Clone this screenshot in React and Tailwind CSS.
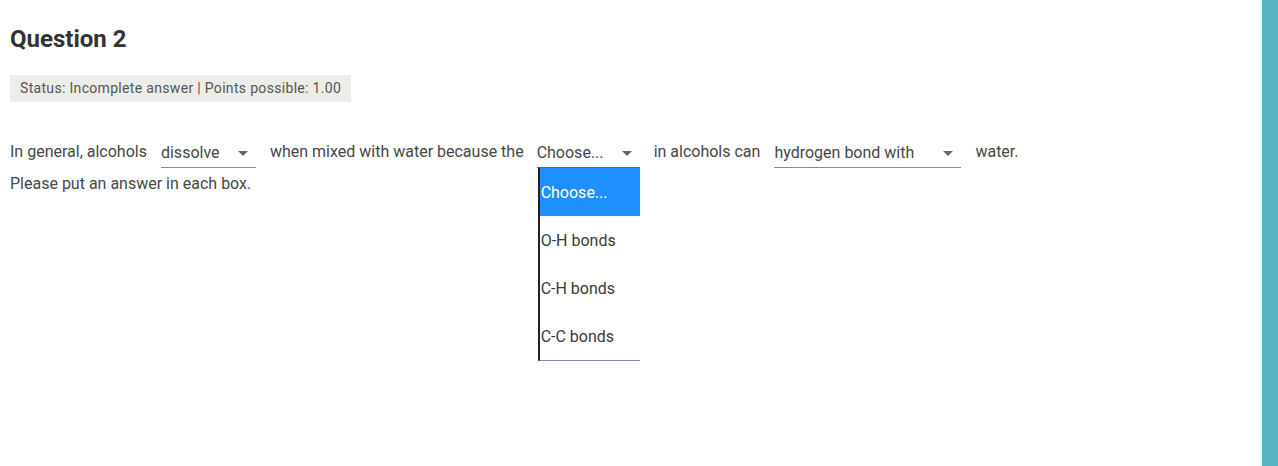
import React from 'react';

const Caret = () => (
  <svg width="10" height="5" viewBox="0 0 10 5" className="shrink-0">
    <path d="M0 0 L10 0 L5 5 Z" fill="#666" />
  </svg>
);

const Select = ({ value, width, focused, children }) => (
  <div className={`relative h-[28px] flex items-center justify-between border-b ${focused ? 'border-[#1a7f8e]' : 'border-[#8a8a8a]'}`} style={{ width }}>
    <span className="text-[16px] text-[#474747] leading-none pb-[2px]">{value}</span>
    <span className="mr-[8px]"><Caret /></span>
    {children}
  </div>
);

const App = () => {
  const options = ['Choose...', 'O-H bonds', 'C-H bonds', 'C-C bonds'];

  return (
    <div className="flex w-[1278px] h-[466px] bg-white" style={{ fontFamily: 'Roboto, "Liberation Sans", sans-serif' }}>
      {/* Main */}
      <div className="flex-1 pl-[10px] pt-[24px]">
        <h2 className="text-[24px] font-bold text-[#333] leading-[30px]">Question 2</h2>

        <div className="inline-block mt-[21px] bg-[#ecede8] px-[10px] h-[27px] leading-[27px] text-[14px] text-[#555] tracking-[0.32px]">
          Status: Incomplete answer | Points possible: 1.00
        </div>

        {/* Question text */}
        <div className="mt-[38px] flex items-end text-[16px] text-[#474747]">
          <span className="leading-[22px] pb-[5px] mr-[14px]">In general, alcohols</span>
          <Select value="dissolve" width={95} />
          <span className="leading-[22px] pb-[5px] ml-[14px] mr-[13px]">when mixed with water because the</span>
          <Select value="Choose..." width={103} focused>
            <div className="absolute left-[1px] top-[28px] w-[102px] bg-white border-l-2 border-[#222] border-b border-b-[#7f8ca8] z-10">
              {options.map((opt, i) => (
                <div key={opt} className={`h-[48px] flex items-center pl-[1px] pt-[2px] text-[16px] ${i === 0 ? 'bg-[#1e90ff] text-white' : 'text-[#3a3a3a]'}`}>
                  {opt}
                </div>
              ))}
            </div>
          </Select>
          <span className="leading-[22px] pb-[5px] mx-[14px]">in alcohols can</span>
          <Select value="hydrogen bond with" width={187} />
          <span className="leading-[22px] pb-[5px] ml-[14px]">water.</span>
        </div>
        <p className="mt-[5px] text-[16px] text-[#474747] leading-[22px]">Please put an answer in each box.</p>
      </div>

      {/* Right bar */}
      <div className="w-[16px] bg-[#56b3bf]" />
    </div>
  );
};

export default App;
